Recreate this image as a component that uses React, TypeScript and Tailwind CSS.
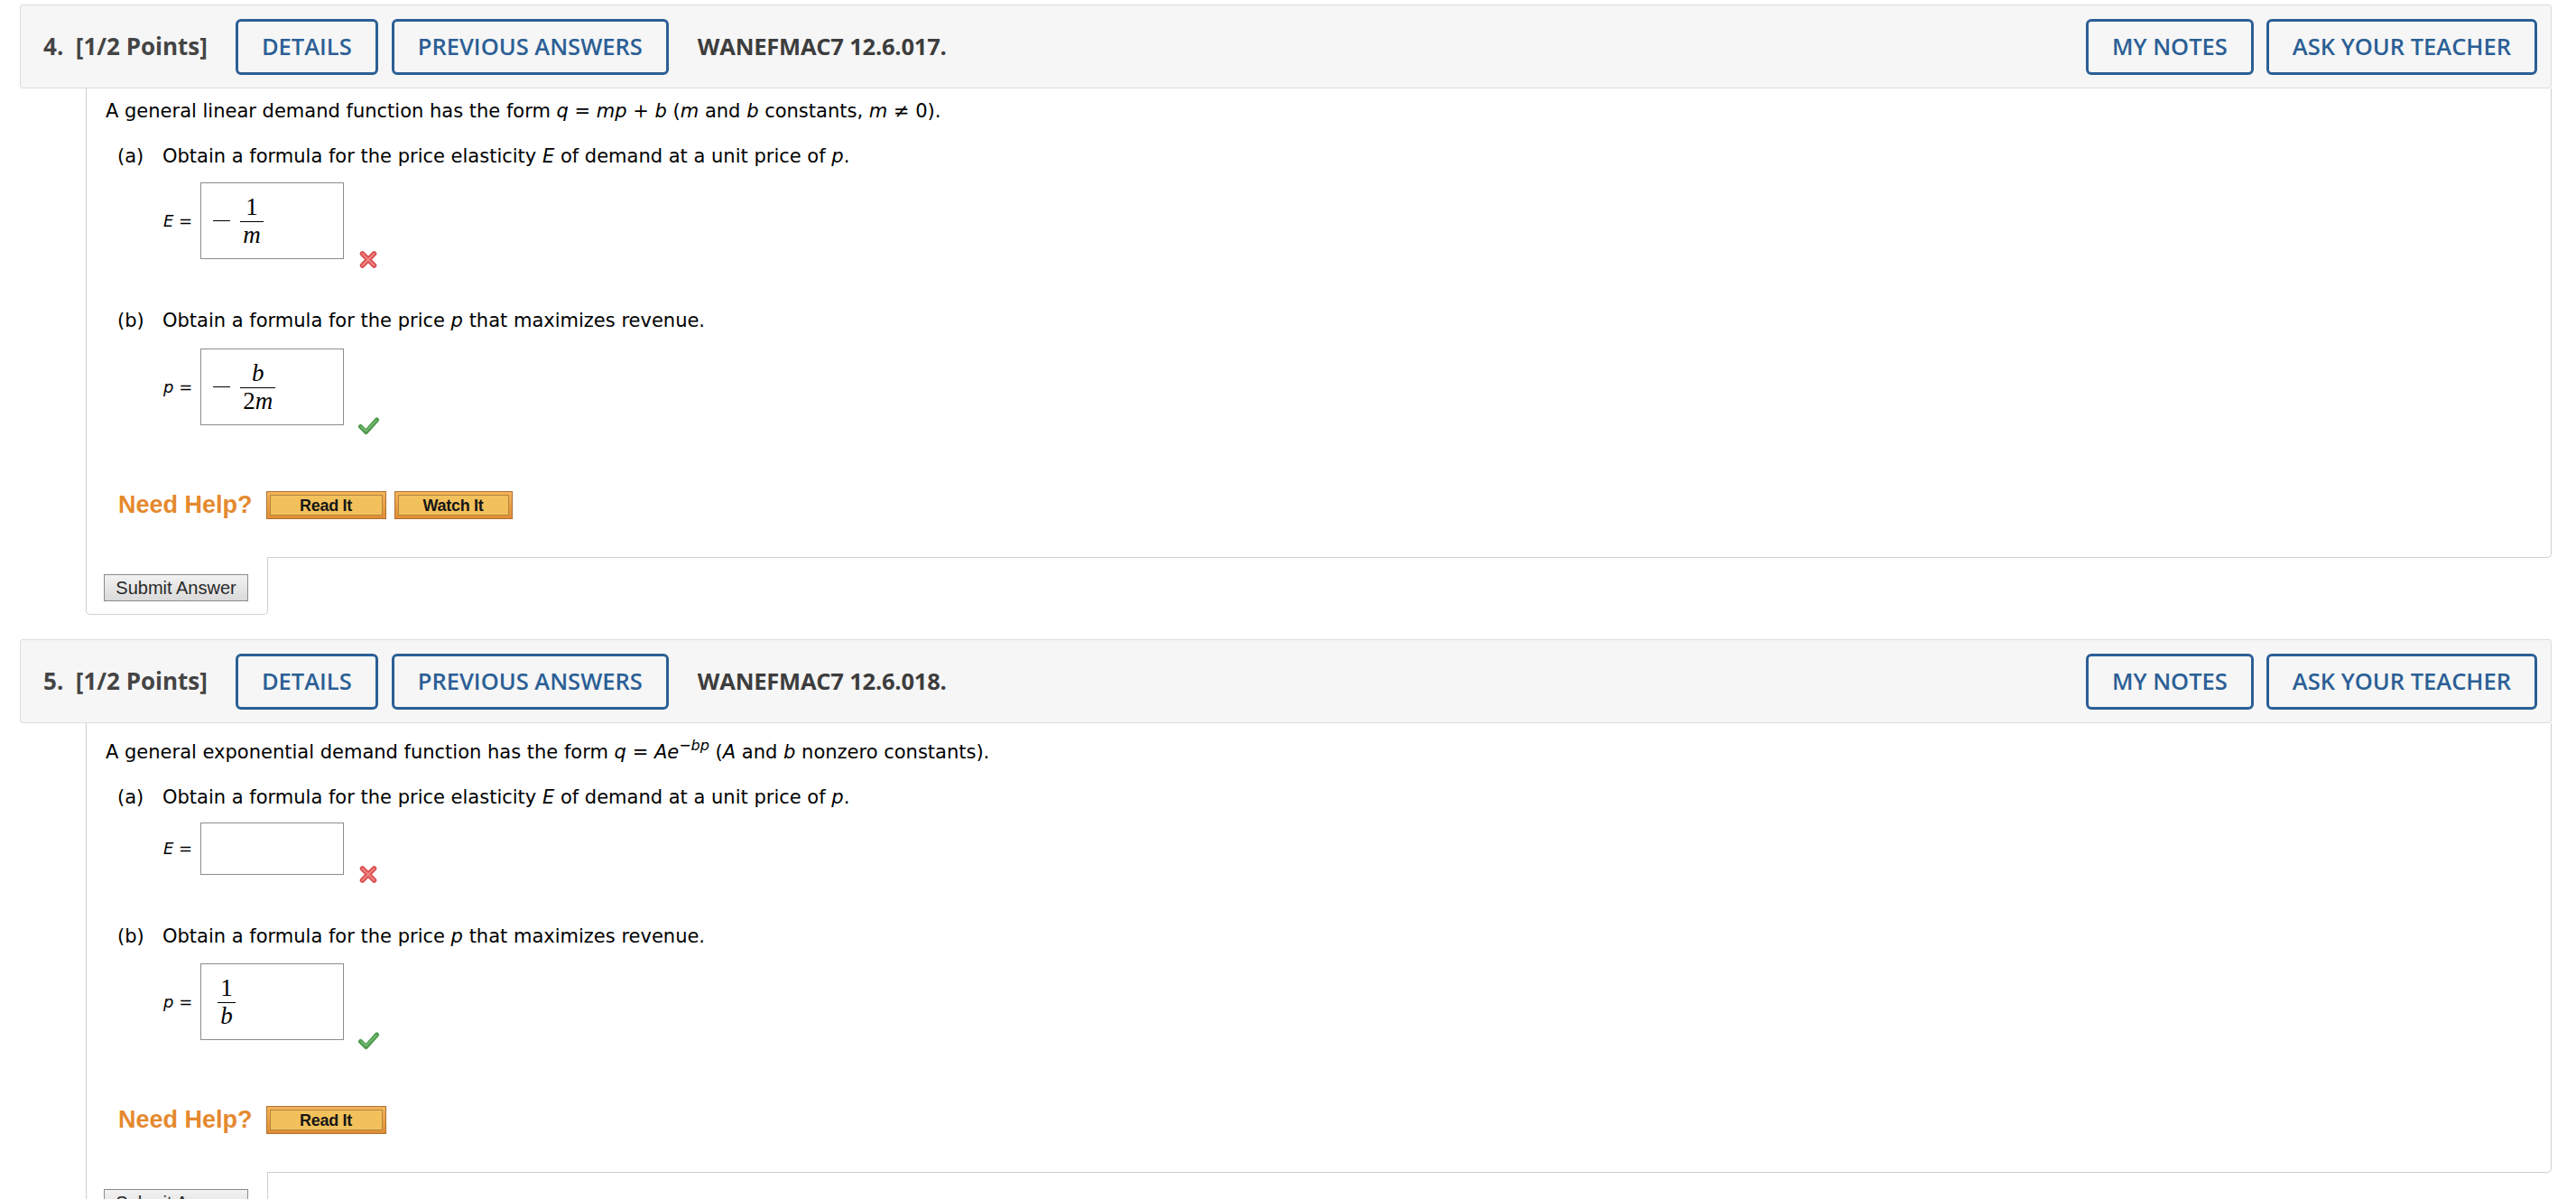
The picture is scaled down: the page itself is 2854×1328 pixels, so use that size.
import React from "react";

const body = "font-['DejaVu_Sans',Verdana,sans-serif]";

function HeadButton({ children, className = "" }: { children: React.ReactNode; className?: string }) {
  return (
    <div
      className={`flex h-[62px] items-center rounded-md border-[3px] border-[#2b5f95] px-[26px] font-['Open_Sans',sans-serif] text-[25.5px] font-semibold text-[#2b5f95] ${className}`}
    >
      {children}
    </div>
  );
}

function Header({ num, code }: { num: number; code: string }) {
  return (
    <div className="flex h-[93px] items-center rounded-[3px] border border-[#dcdcdc] bg-[#f6f6f6] pl-[25px] pr-[15px]">
      <span className="font-['Open_Sans',sans-serif] text-[26px] font-bold text-[#444]">
        {num}.&nbsp; [1/2 Points]
      </span>
      <HeadButton className="ml-[31px]">DETAILS</HeadButton>
      <HeadButton className="ml-[15px]">PREVIOUS ANSWERS</HeadButton>
      <span className="ml-[32px] font-['Open_Sans',sans-serif] text-[25.5px] font-bold tracking-[-0.2px] text-[#3d3d3d]">
        WANEFMAC7 {code}.
      </span>
      <div className="ml-auto flex gap-[14px]">
        <HeadButton>MY NOTES</HeadButton>
        <HeadButton>ASK YOUR TEACHER</HeadButton>
      </div>
    </div>
  );
}

function XMark() {
  return (
    <svg width="22" height="21" viewBox="0 0 22 21">
      <path d="M4.5 4 L17.5 17 M17.5 4 L4.5 17" stroke="#d94c4c" strokeWidth="5.5" strokeLinecap="round" />
      <path d="M4.5 4 L17.5 17 M17.5 4 L4.5 17" stroke="#f18585" strokeWidth="2" strokeLinecap="round" />
    </svg>
  );
}

function CheckMark() {
  return (
    <svg width="25" height="21" viewBox="0 0 25 21">
      <path d="M3.5 11.5 L9.5 17.5 L21.5 4" fill="none" stroke="#4e9a4e" strokeWidth="5" strokeLinecap="round" strokeLinejoin="round" />
      <path d="M4 11.5 L9.5 16.5 L21 4.5" fill="none" stroke="#78bd78" strokeWidth="1.6" strokeLinecap="round" strokeLinejoin="round" />
    </svg>
  );
}

function Frac({ num, den }: { num: React.ReactNode; den: React.ReactNode }) {
  return (
    <span className="inline-flex flex-col items-center font-['Liberation_Serif',serif] text-[27px] leading-[26px] text-black">
      <span className="px-[3px] pb-[3px]">{num}</span>
      <span className="h-[1.5px] w-full bg-black" />
      <span className="px-[3px] pt-[1px]">{den}</span>
    </span>
  );
}

function Minus() {
  return <span className="mr-[11px] h-[1.5px] w-[19px] bg-black" />;
}

function AnswerRow({
  label,
  children,
  ok,
  height,
  pad,
  className = "",
}: {
  label: React.ReactNode;
  children?: React.ReactNode;
  ok: boolean;
  height: number;
  pad: string;
  className?: string;
}) {
  return (
    <div className={`ml-[64px] flex items-start ${className}`}>
      <div className="flex items-center">
        <span className="mr-[9px] text-[18px]">{label}</span>
        <div
          className={`flex w-[159px] items-center border border-[#8c8c8c] bg-white ${pad} ${height === 85 ? "h-[85px]" : "h-[58px]"}`}
        >
          {children}
        </div>
      </div>
      <div className={`${ok ? "ml-[15px]" : "ml-[16px]"} ${height === 85 ? "mt-[75px]" : "mt-[47px]"}`}>
        {ok ? <CheckMark /> : <XMark />}
      </div>
    </div>
  );
}

function Part({ tag, children, className = "" }: { tag: string; children: React.ReactNode; className?: string }) {
  return (
    <div className={`flex ${className}`}>
      <span className="ml-[13px] w-[50px]">({tag})</span>
      <span>{children}</span>
    </div>
  );
}

function HelpButton({ children, w }: { children: React.ReactNode; w: string }) {
  return (
    <div className={`h-[31px] ${w} border border-[#b0702f] bg-gradient-to-b from-[#f5b45a] to-[#e08d34] p-[3px]`}>
      <div className="flex h-full w-full items-center justify-center border border-[#b4863f] bg-[#f3c15b] font-['Liberation_Sans',Arial,sans-serif] text-[18px] font-bold tracking-[-0.3px] text-[#161616]">
        {children}
      </div>
    </div>
  );
}

function NeedHelp({ watch }: { watch: boolean }) {
  return (
    <div className="ml-[14px] mt-[62px] flex items-center">
      <span className="mr-[15px] font-['Liberation_Sans',Arial,sans-serif] text-[27px] font-bold leading-none text-[#e5892e]">
        Need Help?
      </span>
      <HelpButton w="w-[133px]">Read It</HelpButton>
      {watch && (
        <div className="ml-[9px]">
          <HelpButton w="w-[131px]">Watch It</HelpButton>
        </div>
      )}
    </div>
  );
}

function SubmitTab() {
  return (
    <div className="relative z-10 ml-[73px] -mt-px w-[202px] rounded-b-[5px] border-x border-b border-[#cfcfcf] bg-white pb-[14px] pl-[19px] pt-[19px]">
      <div className="flex h-[30px] w-[160px] items-center justify-center border border-[#8a8a8a] bg-gradient-to-b from-[#f2f2f2] to-[#dadada] font-['Liberation_Sans',Arial,sans-serif] text-[20px] text-[#2a2a2a]">
        Submit Answer
      </div>
    </div>
  );
}

function Question4() {
  return (
    <section>
      <Header num={4} code="12.6.017" />
      <div className={`ml-[73px] rounded-br-[5px] border-x border-b border-[#cfcfcf] pb-[42px] pl-[21px] pt-[13px] text-[21px] leading-[24px] text-black ${body}`}>
        <p>
          A general linear demand function has the form <i>q</i> = <i>mp</i> + <i>b</i> (<i>m</i> and <i>b</i>{" "}
          constants, <i>m</i> ≠ 0).
        </p>
        <Part tag="a" className="mt-[26px]">
          Obtain a formula for the price elasticity <i>E</i> of demand at a unit price of <i>p</i>.
        </Part>
        <AnswerRow className="mt-[17px]" label={<><i>E</i> =</>} ok={false} height={85} pad="pl-[13px]">
          <Minus />
          <Frac num="1" den={<i>m</i>} />
        </AnswerRow>
        <Part tag="b" className="mt-[45px]">
          Obtain a formula for the price <i>p</i> that maximizes revenue.
        </Part>
        <AnswerRow className="mt-[19px]" label={<><i>p</i> =</>} ok height={85} pad="pl-[13px]">
          <Minus />
          <Frac num={<i>b</i>} den={<>2<i>m</i></>} />
        </AnswerRow>
        <NeedHelp watch />
      </div>
      <SubmitTab />
    </section>
  );
}

function Question5() {
  return (
    <section>
      <Header num={5} code="12.6.018" />
      <div className={`ml-[73px] rounded-br-[5px] border-x border-b border-[#cfcfcf] pb-[42px] pl-[21px] pt-[20px] text-[21px] leading-[24px] text-black ${body}`}>
        <p>
          A general exponential demand function has the form <i>q</i> = <i>Ae</i>
          <span className="relative -top-[9px] text-[16px] leading-none">
            −<i>bp</i>
          </span>{" "}
          (<i>A</i> and <i>b</i> nonzero constants).
        </p>
        <Part tag="a" className="mt-[26px]">
          Obtain a formula for the price elasticity <i>E</i> of demand at a unit price of <i>p</i>.
        </Part>
        <AnswerRow className="mt-[16px]" label={<><i>E</i> =</>} ok={false} height={58} pad="pl-[13px]" />
        <Part tag="b" className="mt-[46px]">
          Obtain a formula for the price <i>p</i> that maximizes revenue.
        </Part>
        <AnswerRow className="mt-[18px]" label={<><i>p</i> =</>} ok height={85} pad="pl-[18px]">
          <Frac num="1" den={<i>b</i>} />
        </AnswerRow>
        <NeedHelp watch={false} />
      </div>
      <SubmitTab />
    </section>
  );
}

export default function App() {
  return (
    <div className="min-h-screen bg-white pl-[22px] pr-[27px] pt-[5px]">
      <Question4 />
      <div className="h-[27px]" />
      <Question5 />
    </div>
  );
}
